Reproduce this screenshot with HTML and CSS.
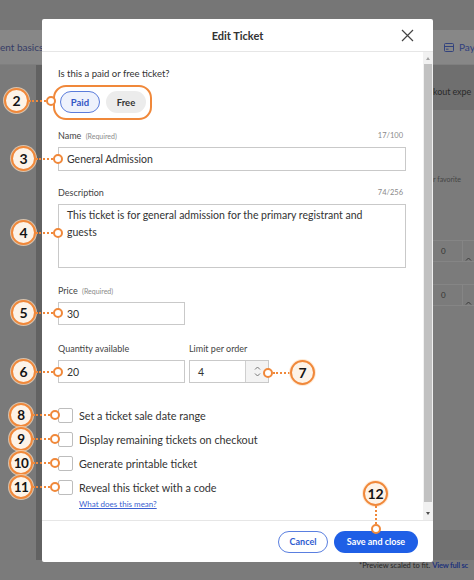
FILE: index.html
```html
<!DOCTYPE html>
<html lang="en">
<head>
<meta charset="utf-8">
<title>Edit Ticket</title>
<link rel="stylesheet" href="styles.css">
</head>
<body>
<div class="app">
  <div class="topbar"></div>
  <div class="tabs">
    <span class="tab-left">ent basics</span>
    <span class="tab-right">
      <svg class="card" width="10" height="9" viewBox="0 0 10 9"><rect x="0.5" y="0.5" width="9" height="8" rx="1" fill="none" stroke="#33437e"/><path d="M0.5 3.5H9.5M2 6.2H4.5" stroke="#33437e"/></svg>
      <span>Pay</span>
    </span>
  </div>
  <div class="content">
    <div class="lcol"></div>
    <div class="ledge"></div>
    <div class="main"></div>
    <div class="rcol">
      <div class="banner">kout expe</div>
      <div class="rnote">r favorite</div>
      <div class="rrow first"><span class="rbox">0</span><span class="rspin"><svg width="7" height="4" viewBox="0 0 7 4"><path d="M1 3.5L3.5 1L6 3.5" fill="none" stroke="#3a3a3a"/></svg></span></div>
      <div class="rrow"><span class="rbox">0</span><span class="rspin"><svg width="7" height="4" viewBox="0 0 7 4"><path d="M1 3.5L3.5 1L6 3.5" fill="none" stroke="#3a3a3a"/></svg></span></div>
      <div class="rfoot"></div>
    </div>
  </div>
  <div class="footnote">*Preview scaled to fit. <b>View full sc</b></div>
</div>

<div class="modal">
  <div class="mhead">
    <h1>Edit Ticket</h1>
    <button class="close" aria-label="Close"><svg width="13" height="13" viewBox="0 0 13 13"><path d="M1 1L12 12M12 1L1 12" stroke="#444" stroke-width="1.2"/></svg></button>
  </div>
  <div class="mbody">
    <div class="scroll">
      <p class="q">Is this a paid or free ticket?</p>
      <div class="toggle">
        <button class="seg active">Paid</button>
        <button class="seg">Free</button>
      </div>

      <div class="field">
        <div class="lab"><span>Name <small>(Required)</small></span><span class="count">17/100</span></div>
        <div class="input">General Admission</div>
      </div>

      <div class="field desc">
        <div class="lab"><span>Description</span><span class="count">74/256</span></div>
        <div class="input area"><span class="area-text">This ticket is for general admission for the primary registrant and guests</span></div>
      </div>

      <div class="field">
        <div class="lab"><span>Price <small>(Required)</small></span></div>
        <div class="input short">30</div>
      </div>

      <div class="row">
        <div class="field inrow">
          <div class="lab"><span>Quantity available</span></div>
          <div class="input short">20</div>
        </div>
        <div class="field inrow">
          <div class="lab"><span>Limit per order</span></div>
          <div class="input limit"><span class="val">4</span>
            <span class="spin">
              <svg width="7" height="4" viewBox="0 0 7 4"><path d="M1 3.5L3.5 1L6 3.5" fill="none" stroke="#777"/></svg>
              <svg width="7" height="4" viewBox="0 0 7 4"><path d="M1 0.5L3.5 3L6 0.5" fill="none" stroke="#777"/></svg>
            </span>
          </div>
        </div>
      </div>

      <div class="checks">
        <label class="check"><span class="box"></span>Set a ticket sale date range</label>
        <label class="check"><span class="box"></span>Display remaining tickets on checkout</label>
        <label class="check"><span class="box"></span>Generate printable ticket</label>
        <label class="check"><span class="box"></span>Reveal this ticket with a code</label>
        <a class="link" href="#">What does this mean?</a>
      </div>
    </div>
    <div class="sbar">
      <span class="arr up"></span>
      <span class="thumb"></span>
      <span class="arr down"></span>
    </div>
  </div>
  <div class="mfoot">
    <button class="btn ghost">Cancel</button>
    <button class="btn primary">Save and close</button>
  </div>
</div>

<div class="ring"></div>

<div class="ann a2"><span class="badge">2</span><span class="dots"></span><span class="pin"></span></div>
<div class="ann a3"><span class="badge">3</span><span class="dots"></span><span class="pin"></span></div>
<div class="ann a4"><span class="badge">4</span><span class="dots"></span><span class="pin"></span></div>
<div class="ann a5"><span class="badge">5</span><span class="dots"></span><span class="pin"></span></div>
<div class="ann a6"><span class="badge">6</span><span class="dots"></span><span class="pin"></span></div>
<div class="ann a7"><span class="pin"></span><span class="dots"></span><span class="badge">7</span></div>
<div class="ann a8"><span class="badge sm">8</span><span class="dots"></span><span class="pin"></span></div>
<div class="ann a9"><span class="badge sm">9</span><span class="dots"></span><span class="pin"></span></div>
<div class="ann a10"><span class="badge sm">10</span><span class="dots"></span><span class="pin"></span></div>
<div class="ann a11"><span class="badge sm">11</span><span class="dots"></span><span class="pin"></span></div>
<div class="ann col a12"><span class="badge">12</span><span class="dots v"></span><span class="pin"></span></div>
</body>
</html>
```

FILE: styles.css
```css
* { box-sizing: border-box; }

body {
  margin: 0;
  width: 474px;
  height: 580px;
  overflow: hidden;
  position: relative;
  background: #7b7b7b;
  font-family: Lato, "Open Sans", "DejaVu Sans", sans-serif;
}

/* ---------- dimmed background app ---------- */
.app {
  display: flex;
  flex-direction: column;
  height: 580px;
}
.topbar { height: 30px; flex: none; background: #767676; }
.tabs {
  height: 35px;
  flex: none;
  background: #878787;
  border-bottom: 1px solid #7f7f7f;
  display: flex;
  align-items: center;
  justify-content: space-between;
  font-size: 10px;
  white-space: nowrap;
}
.tab-left { color: #363c66; }
.tab-right {
  width: 31px;
  display: flex;
  align-items: center;
  gap: 5px;
  color: #30407e;
  padding-left: 1px;
}
.card { flex: none; }

.content { flex: 1; display: flex; min-height: 0; }
.lcol { width: 36px; background: #7a7a7a; }
.ledge { width: 6px; background: #626262; }
.main { flex: 1; background: #7b7b7b; }
.rcol {
  width: 41px;
  display: flex;
  flex-direction: column;
  white-space: nowrap;
  background: #7b7b7b;
}
.banner {
  height: 45px;
  flex: none;
  background: #6f6f6f;
  font-size: 9px;
  line-height: 12px;
  color: #2a2a2a;
  padding-top: 21px;
  letter-spacing: -0.1px;
}
.rnote {
  margin-top: 64px;
  font-size: 7px;
  line-height: 10px;
  color: #454545;
}
.rrow {
  display: flex;
  height: 22px;
  margin-top: 22px;
  border-top: 1px solid #858585;
  border-bottom: 1px solid #858585;
}
.rrow.first { margin-top: 56px; }
.rbox {
  width: 30px;
  border-right: 1px solid #858585;
  font-size: 8px;
  color: #333;
  padding-left: 8px;
  display: flex;
  align-items: center;
}
.rspin { width: 11px; padding: 4px 0 0 2px; }
.rfoot { margin-top: auto; height: 30px; background: #717171; }

.footnote {
  height: 20px;
  flex: none;
  background: #7b7b7b;
  font-size: 7.5px;
  line-height: 12px;
  color: #262626;
  padding-left: 359px;
  white-space: nowrap;
}
.footnote b { color: #22337c; font-size: 7.5px; letter-spacing: -0.2px; }

/* ---------- modal ---------- */
.modal {
  position: absolute;
  left: 42px;
  top: 19px;
  width: 391px;
  height: 543px;
  background: #fff;
  border-radius: 2px;
  overflow: hidden;
  display: flex;
  flex-direction: column;
}
.mhead {
  height: 33px;
  flex: none;
  border-bottom: 1px solid #e6e6e6;
  display: grid;
  grid-template-columns: 1fr auto 1fr;
  align-items: center;
}
.mhead h1 {
  grid-column: 2;
  margin: 0;
  font-size: 11px;
  font-weight: 700;
  color: #333;
}
.close {
  grid-column: 3;
  justify-self: end;
  margin-right: 19px;
  width: 13px;
  height: 13px;
  padding: 0;
  border: 0;
  background: none;
  display: flex;
}

.mbody { flex: 1; display: flex; min-height: 0; }
.scroll {
  flex: 1;
  padding: 16px 17px 0 16px;
  overflow: hidden;
}
.sbar {
  width: 10px;
  background: #f1f1f1;
  display: flex;
  flex-direction: column;
  align-items: center;
}
.arr {
  width: 0;
  height: 0;
  border-left: 2.5px solid transparent;
  border-right: 2.5px solid transparent;
}
.arr.up { margin-top: 5px; border-bottom: 3px solid #a3a3a3; }
.arr.down { margin-top: 10px; border-top: 3px solid #505050; }
.thumb {
  width: 8px;
  height: 438px;
  margin-top: 4px;
  background: #c1c1c1;
}

.q {
  margin: 0;
  height: 12px;
  font-size: 9.5px;
  line-height: 12px;
  color: #333;
}
.toggle {
  display: flex;
  gap: 6px;
  margin: 11px 0 0 2px;
  height: 22px;
}
.seg {
  width: 40px;
  height: 22px;
  padding: 0;
  border-radius: 11px;
  border: 1px solid transparent;
  background: #ececec;
  color: #333;
  font-family: inherit;
  font-size: 9.5px;
  font-weight: 700;
}
.seg.active {
  border-color: #5a7cdb;
  background: #eef2fc;
  color: #3356c5;
}

.field { margin-top: 17px; }
.field.desc { margin-top: 16px; }
.lab {
  display: flex;
  justify-content: space-between;
  align-items: center;
  height: 12px;
  font-size: 9px;
  line-height: 12px;
  color: #444;
  margin-bottom: 5px;
}
.lab span { line-height: 12px; }
.lab small { font-size: 7px; color: #8a8a8a; margin-left: 2px; line-height: 12px; }
.count { font-size: 7.5px; color: #8a8a8a; margin-right: 3px; }

.input {
  height: 24px;
  border: 1px solid #c9c9c9;
  font-size: 10.5px;
  color: #333;
  padding: 0 8px;
  display: flex;
  align-items: center;
}
.input.area {
  height: 64px;
  display: block;
  padding: 2px 8px;
  line-height: 17px;
}
.area-text { display: block; max-width: 310px; }
.input.short { width: 127px; height: 23px; }

.row { display: flex; gap: 4px; margin-top: 18px; }
.field.inrow { margin-top: 0; }
.input.limit { width: 80px; height: 23px; padding: 0 0 0 8px; }
.limit .val { flex: 1; }
.spin {
  width: 23px;
  height: 100%;
  border-left: 1px solid #cfcfcf;
  background: #f3f3f3;
  display: flex;
  flex-direction: column;
  align-items: center;
  justify-content: center;
  gap: 3px;
}

.checks { margin-top: 20px; }
.check {
  height: 24px;
  display: flex;
  align-items: center;
  gap: 6px;
  font-size: 10.8px;
  color: #333;
}
.box {
  width: 15px;
  height: 15px;
  border: 1px solid #bdbdbd;
  border-radius: 2px;
  background: #fff;
}
.link {
  display: block;
  margin-left: 21px;
  font-size: 8px;
  line-height: 10px;
  color: #3a5fd0;
  text-decoration: underline;
}

.mfoot {
  height: 42px;
  flex: none;
  border-top: 1px solid #e6e6e6;
  display: flex;
  justify-content: flex-end;
  align-items: center;
  gap: 6px;
  padding-right: 15px;
}
.btn {
  height: 22px;
  padding: 0;
  border-radius: 11px;
  font-family: inherit;
  font-size: 9px;
  font-weight: 700;
}
.btn.ghost { width: 50px; border: 1px solid #5a7fe0; background: #fff; color: #2e5bd0; }
.btn.primary { width: 84px; border: 0; background: #1f5fe6; color: #fff; }

/* ---------- annotation overlay ---------- */
.ring {
  position: absolute;
  left: 53px;
  top: 85px;
  width: 99px;
  height: 35px;
  border: 2px solid #f0883a;
  border-radius: 13px;
}
.ann { position: absolute; display: flex; align-items: center; }
.ann.col { flex-direction: column; }
.badge {
  flex: none;
  width: 25px;
  height: 25px;
  border-radius: 50%;
  border: 2.5px solid #f0883a;
  background: #fdf3e8;
  box-shadow: 0 0 0 1px rgba(255, 225, 195, 0.7);
  display: flex;
  align-items: center;
  justify-content: center;
  font-size: 14px;
  font-weight: 700;
  color: #141414;
}
.badge.sm { width: 24px; height: 24px; font-size: 13.5px; letter-spacing: -0.5px; }
.dots { width: 17px; border-top: 2px dotted #f0883a; }
.dots.v { width: 0; height: 18px; border-top: 0; border-left: 2px dotted #f0883a; }
.pin {
  flex: none;
  width: 10px;
  height: 10px;
  border-radius: 50%;
  border: 2px solid #f0883a;
  background: #fff;
}
.a2 { left: 4px; top: 88px; }
.a3 { left: 11px; top: 146px; }
.a4 { left: 11px; top: 220px; }
.a5 { left: 11px; top: 300px; }
.a6 { left: 11px; top: 359px; }
.a7 { left: 263px; top: 360px; }
.a8 { left: 9px; top: 403px; }
.a9 { left: 9px; top: 427px; }
.a10 { left: 9px; top: 451px; }
.a11 { left: 9px; top: 475px; }
.a12 { left: 363px; top: 481px; }
```
